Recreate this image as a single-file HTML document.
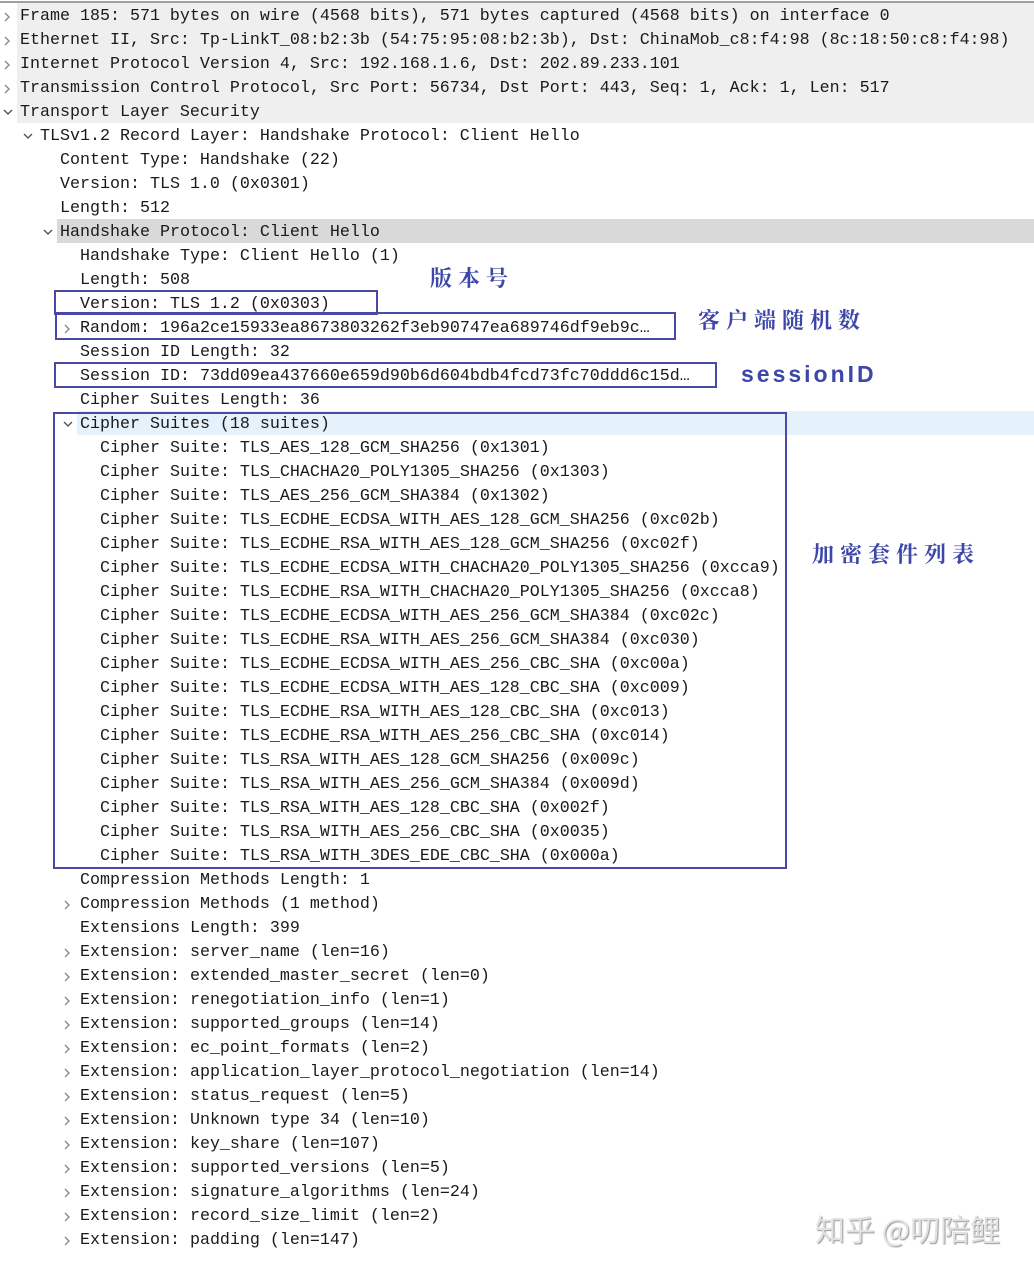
<!DOCTYPE html>
<html><head><meta charset="utf-8"><style>
body{margin:0;width:1034px;height:1273px;background:#fff;position:relative;overflow:hidden}
.r{position:absolute;height:24px;line-height:24px;font-family:"Liberation Mono",monospace;font-size:16.67px;color:#1a1a1a;white-space:pre;right:0}
.ar{position:absolute;top:9px}
.box{position:absolute;border:2.5px solid #4a4aa6;box-sizing:border-box}
.lb{position:absolute;color:#3d47a8;font-family:"Noto Serif CJK SC","WenQuanYi Zen Hei",serif;font-size:22px;letter-spacing:6px;font-weight:bold}
</style></head><body>
<div style="position:absolute;left:0;top:1px;width:1034px;height:2px;background:#a0a0a0"></div>
<div style="position:absolute;left:17px;top:3px;right:0;height:120px;background:#efefef"></div>
<div style="position:absolute;left:57px;top:219px;right:0;height:24px;background:#d9d9d9"></div>
<div style="position:absolute;left:77px;top:411px;right:0;height:24px;background:#e5f1fb"></div>
<div id="c"></div>
<div class="box" style="left:54px;top:290px;width:324px;height:25px"></div>
<div class="box" style="left:55px;top:312px;width:621px;height:28px"></div>
<div class="box" style="left:54px;top:362px;width:663px;height:26px"></div>
<div class="box" style="left:53px;top:412px;width:734px;height:457px"></div>
<div class="lb" style="left:430px;top:262px">版本号</div>
<div class="lb" style="left:698px;top:304px">客户端随机数</div>
<div class="lb" style="left:741px;top:361px;font-family:'Liberation Sans',sans-serif;font-size:23px;letter-spacing:3px">sessionID</div>
<div class="lb" style="left:812px;top:538px">加密套件列表</div>
<div style="position:absolute;left:815px;top:1206px;font-family:'Noto Sans CJK SC',sans-serif;font-size:30px;color:#e2e2e2;text-shadow:1px 1px 1px #999">知乎 @叨陪鲤</div>
<script>
var rows=[
[0,'>','Frame 185: 571 bytes on wire (4568 bits), 571 bytes captured (4568 bits) on interface 0'],
[0,'>','Ethernet II, Src: Tp-LinkT_08:b2:3b (54:75:95:08:b2:3b), Dst: ChinaMob_c8:f4:98 (8c:18:50:c8:f4:98)'],
[0,'>','Internet Protocol Version 4, Src: 192.168.1.6, Dst: 202.89.233.101'],
[0,'>','Transmission Control Protocol, Src Port: 56734, Dst Port: 443, Seq: 1, Ack: 1, Len: 517'],
[0,'v','Transport Layer Security'],
[1,'v','TLSv1.2 Record Layer: Handshake Protocol: Client Hello'],
[2,'','Content Type: Handshake (22)'],
[2,'','Version: TLS 1.0 (0x0301)'],
[2,'','Length: 512'],
[2,'v','Handshake Protocol: Client Hello'],
[3,'','Handshake Type: Client Hello (1)'],
[3,'','Length: 508'],
[3,'','Version: TLS 1.2 (0x0303)'],
[3,'>','Random: 196a2ce15933ea8673803262f3eb90747ea689746df9eb9c…'],
[3,'','Session ID Length: 32'],
[3,'','Session ID: 73dd09ea437660e659d90b6d604bdb4fcd73fc70ddd6c15d…'],
[3,'','Cipher Suites Length: 36'],
[3,'v','Cipher Suites (18 suites)']];
['TLS_AES_128_GCM_SHA256 (0x1301)','TLS_CHACHA20_POLY1305_SHA256 (0x1303)','TLS_AES_256_GCM_SHA384 (0x1302)','TLS_ECDHE_ECDSA_WITH_AES_128_GCM_SHA256 (0xc02b)','TLS_ECDHE_RSA_WITH_AES_128_GCM_SHA256 (0xc02f)','TLS_ECDHE_ECDSA_WITH_CHACHA20_POLY1305_SHA256 (0xcca9)','TLS_ECDHE_RSA_WITH_CHACHA20_POLY1305_SHA256 (0xcca8)','TLS_ECDHE_ECDSA_WITH_AES_256_GCM_SHA384 (0xc02c)','TLS_ECDHE_RSA_WITH_AES_256_GCM_SHA384 (0xc030)','TLS_ECDHE_ECDSA_WITH_AES_256_CBC_SHA (0xc00a)','TLS_ECDHE_ECDSA_WITH_AES_128_CBC_SHA (0xc009)','TLS_ECDHE_RSA_WITH_AES_128_CBC_SHA (0xc013)','TLS_ECDHE_RSA_WITH_AES_256_CBC_SHA (0xc014)','TLS_RSA_WITH_AES_128_GCM_SHA256 (0x009c)','TLS_RSA_WITH_AES_256_GCM_SHA384 (0x009d)','TLS_RSA_WITH_AES_128_CBC_SHA (0x002f)','TLS_RSA_WITH_AES_256_CBC_SHA (0x0035)','TLS_RSA_WITH_3DES_EDE_CBC_SHA (0x000a)'].forEach(function(s){rows.push([4,'','Cipher Suite: '+s])});
rows.push([3,'','Compression Methods Length: 1'],[3,'>','Compression Methods (1 method)'],[3,'','Extensions Length: 399']);
['server_name (len=16)','extended_master_secret (len=0)','renegotiation_info (len=1)','supported_groups (len=14)','ec_point_formats (len=2)','application_layer_protocol_negotiation (len=14)','status_request (len=5)','Unknown type 34 (len=10)','key_share (len=107)','supported_versions (len=5)','signature_algorithms (len=24)','record_size_limit (len=2)','padding (len=147)'].forEach(function(s){rows.push([3,'>','Extension: '+s])});
var h='';
rows.forEach(function(r,i){
 var x=20+r[0]*20,t=5+24*i,a='';
 if(r[1]=='>')a='<svg class="ar" style="left:'+(x-17)+'px;top:7px" width="8" height="10"><path d="M2 1 L6 5 L2 9" fill="none" stroke="#8a8a8a" stroke-width="1.4"/></svg>';
 if(r[1]=='v')a='<svg class="ar" style="left:'+(x-17)+'px;top:7px" width="10" height="8"><path d="M1 2 L5 6 L9 2" fill="none" stroke="#555" stroke-width="1.4"/></svg>';
 h+='<div class="r" style="top:'+t+'px;left:0">'+a+'<span style="position:absolute;left:'+x+'px">'+r[2].replace(/&/g,'&amp;')+'</span></div>';
});
document.getElementById('c').innerHTML=h;
</script>
</body></html>
